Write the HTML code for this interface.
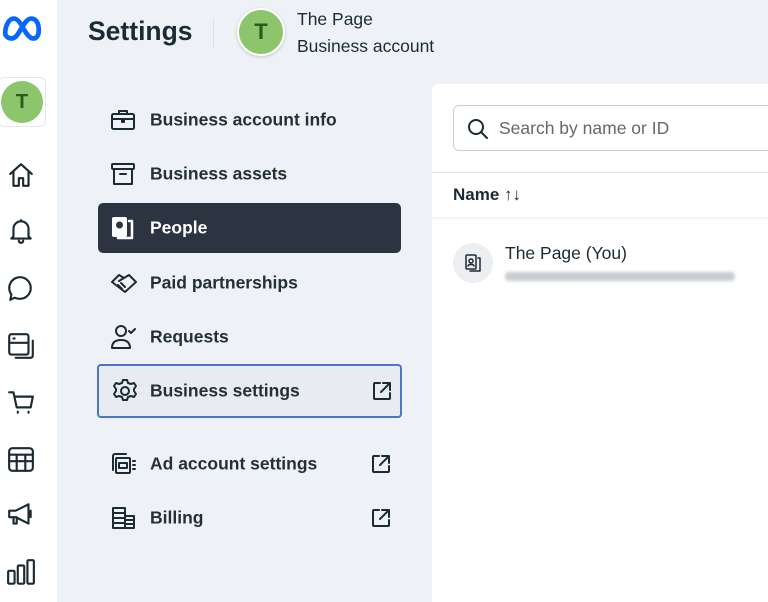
<!DOCTYPE html>
<html><head><style>
*{margin:0;padding:0;box-sizing:border-box}
body{width:768px;height:602px;overflow:hidden;background:#eef2f7;font-family:"Liberation Sans",sans-serif;color:#1c2b33;position:relative}
.rail{position:absolute;left:0;top:0;width:57px;height:602px;background:#fff}
.abs{position:absolute}
svg{fill:none;stroke:#1c2b33;stroke-width:2;stroke-linecap:round;stroke-linejoin:round}
.item{position:absolute;left:98px;width:303px;height:50px;font-size:17.5px;font-weight:bold;color:#252f38}
.item .t{position:absolute;left:52px;top:50%;transform:translateY(-50%)}
.item svg{position:absolute;left:12px;top:50%;transform:translateY(-50%)}
.ext{position:absolute;left:272px !important}
</style></head><body>
<div class="rail">
 <svg class="abs" style="left:0px;top:12px" width="44" height="32" viewBox="0 0 42 30"><path d="M5 20c0-8 4-14 8-14 4 0 7 5 9 9 3 5 6 10 10 10 3 0 5-3 5-8 0-7-3-11-7-11-4 0-7 5-10 10-3 5-5 9-9 9-4 0-6-3-6-5z" stroke="#0866ff" stroke-width="4.5"/></svg>
 <div class="abs" style="left:-2px;top:77px;width:48px;height:50px;border:1px solid #e4e6ea;border-radius:6px;background:#fff"></div>
 <div class="abs" style="left:1px;top:81px;width:42px;height:42px;border-radius:50%;background:#8cc56b;color:#2e5a1c;font-weight:bold;font-size:20px;text-align:center;line-height:42px">T</div>
 <svg class="abs" style="left:7px;top:161px" width="28" height="28" viewBox="0 0 26 26"><path d="M3 12L13 3l10 9M6 10v13h5v-7h4v7h5V10"/></svg>
 <svg class="abs" style="left:7px;top:217px" width="28" height="28" viewBox="0 0 26 26"><path d="M6 18V11a7 7 0 0114 0v7l2 2H4zM11 22a2 2 0 004 0M13 3v1"/></svg>
 <svg class="abs" style="left:6px;top:274px" width="28" height="28" viewBox="0 0 26 26"><path d="M13 3a10 10 0 110 20c-2 0-4-.5-5-1l-4 2 1-5a10 10 0 018-16z"/></svg>
 <svg class="abs" style="left:7px;top:331px" width="28" height="30" viewBox="0 0 26 28"><rect x="2" y="3" width="18" height="19" rx="2"/><path d="M2 11h18M6 7h1M24 9v14a2 2 0 01-2 2H8"/></svg>
 <svg class="abs" style="left:7px;top:388px" width="28" height="28" viewBox="0 0 26 26"><path d="M2 4h4l3 14h13l2-10H7M10 22v1M20 22v1"/></svg>
 <svg class="abs" style="left:7px;top:445px" width="28" height="28" viewBox="0 0 26 26"><rect x="2" y="3" width="22" height="21" rx="3"/><path d="M2 9h22M2 15h22M9 9v15M17 9v15"/></svg>
 <svg class="abs" style="left:6px;top:501px" width="30" height="28" viewBox="0 0 28 26"><path d="M3 9h6l12-6v18L9 15H3zM7 15v6h3v-6M23 9v6"/></svg>
 <svg class="abs" style="left:6px;top:558px" width="30" height="30" viewBox="0 0 28 28"><rect x="2" y="12" width="6" height="12" rx="1"/><rect x="11" y="7" width="6" height="17" rx="1"/><rect x="20" y="2" width="6" height="22" rx="1"/></svg>
</div>
<div class="abs" style="left:88px;top:16px;font-size:26.5px;font-weight:bold;color:#1c2b33">Settings</div>
<div class="abs" style="left:213px;top:18px;width:1px;height:30px;background:#dde1e6"></div>
<div class="abs" style="left:237px;top:8px;width:48px;height:48px;border-radius:50%;background:#8cc56b;border:2px solid #fff;box-shadow:0 1px 3px rgba(0,0,0,.2);color:#2e5a1c;font-weight:bold;font-size:22px;text-align:center;line-height:44px">T</div>
<div class="abs" style="left:297px;top:9px;font-size:17.5px;color:#1c2b33">The Page</div>
<div class="abs" style="left:297px;top:36px;font-size:17.5px;color:#1c2b33">Business account</div>

<div class="item" style="top:95px"><svg width="26" height="26" viewBox="0 0 26 26"><rect x="2" y="7" width="22" height="15" rx="1.5"/><path d="M9 7V4h8v3M2 12h22M12 12v3h2v-3"/></svg><span class="t">Business account info</span></div>
<div class="item" style="top:149px"><svg width="26" height="26" viewBox="0 0 26 26"><rect x="2" y="3" width="22" height="5" rx="1"/><rect x="4" y="8" width="18" height="15"/><path d="M10 13h6"/></svg><span class="t">Business assets</span></div>
<div class="item" style="top:203px;background:#2b3440;border-radius:5px;color:#fff"><svg width="26" height="26" viewBox="0 0 26 26" style="stroke:#fff"><rect x="3" y="3" width="13" height="18" rx="1" fill="#fff"/><circle cx="9.5" cy="10" r="2.5" stroke="#2b3440" fill="#2b3440"/><path d="M19 6h3v17H8" stroke-width="2.5"/></svg><span class="t">People</span></div>
<div class="item" style="top:258px"><svg width="28" height="26" viewBox="0 0 28 26"><path d="M2 12l7-7 5 3 5-3 7 7-11 10zM9 11l5-3M8 15l4 4M11 13l4 4"/></svg><span class="t">Paid partnerships</span></div>
<div class="item" style="top:312px"><svg width="28" height="26" viewBox="0 0 28 26"><circle cx="11" cy="7" r="5"/><path d="M2 24c0-6 4-8 9-8s9 2 9 8zM19 7l2 2 4-4"/></svg><span class="t">Requests</span></div>
<div class="item" style="top:364px;height:54px;border:2px solid #4a77c4;border-radius:4px;background:#e8ecf1;left:97px;width:305px"><svg width="26" height="26" viewBox="0 0 26 26" style="left:13px"><circle cx="13" cy="13" r="4"/><path d="M11 2h4l1 3 3 1 3-1 2 3-2 3v2l2 3-2 3-3-1-3 1-1 3h-4l-1-3-3-1-3 1-2-3 2-3v-2L2 8l2-3 3 1 3-1z"/></svg><span class="t" style="left:51px">Business settings</span><svg class="ext" style="left:273px" width="22" height="22" viewBox="0 0 22 22"><path d="M9 3H4a1 1 0 00-1 1v14a1 1 0 001 1h14a1 1 0 001-1v-5M12 3h7v7M19 3l-9 9"/></svg></div>
<div class="item" style="top:439px"><svg width="28" height="26" viewBox="0 0 28 26"><rect x="6" y="7" width="14" height="15" rx="1"/><path d="M3 19V5a2 2 0 012-2h11M9 12h8v5H9zM23 10h2M23 14h2M23 18h2"/></svg><span class="t">Ad account settings</span><svg class="ext" width="22" height="22" viewBox="0 0 22 22"><path d="M9 3H4a1 1 0 00-1 1v14a1 1 0 001 1h14a1 1 0 001-1v-5M12 3h7v7M19 3l-9 9"/></svg></div>
<div class="item" style="top:493px"><svg width="28" height="28" viewBox="0 0 28 28"><path d="M3 4h12v20H3zM3 9h12M3 14h12M3 19h12M15 12h9v12H15M15 16h9M15 20h9"/></svg><span class="t">Billing</span><svg class="ext" width="22" height="22" viewBox="0 0 22 22"><path d="M9 3H4a1 1 0 00-1 1v14a1 1 0 001 1h14a1 1 0 001-1v-5M12 3h7v7M19 3l-9 9"/></svg></div>

<div class="abs" style="left:432px;top:84px;width:336px;height:518px;background:#fff;border-top-left-radius:6px"></div>
<div class="abs" style="left:453px;top:105px;width:330px;height:46px;border:1px solid #ccd0d5;border-radius:6px"></div>
<svg class="abs" style="left:466px;top:117px" width="24" height="24" viewBox="0 0 24 24" ><circle cx="10" cy="10" r="7"/><path d="M15 15l6 6"/></svg>
<div class="abs" style="left:499px;top:118px;font-size:17.5px;color:#65676b">Search by name or ID</div>
<div class="abs" style="left:432px;top:172px;width:336px;height:1px;background:#dadde1"></div>
<div class="abs" style="left:432px;top:217px;width:336px;height:3px;background:linear-gradient(#eceef1,#fff)"></div>
<div class="abs" style="left:453px;top:185px;font-size:17px;font-weight:bold">Name <span style="font-weight:normal">↑↓</span></div>
<div class="abs" style="left:453px;top:243px;width:40px;height:40px;border-radius:50%;background:#eceef1"></div>
<svg class="abs" style="left:463px;top:253px;stroke-width:1.5" width="20" height="20" viewBox="0 0 20 20"><rect x="3" y="2" width="10" height="14" rx="1"/><circle cx="8" cy="8" r="2"/><path d="M5 13c0-2 6-2 6 0M15 5h2v13H7"/></svg>
<div class="abs" style="left:505px;top:243px;font-size:17.5px">The Page (You)</div>
<div class="abs" style="left:505px;top:272px;width:230px;height:9px;background:#c8cbd0;border-radius:4px;filter:blur(1.5px)"></div>
</body></html>
